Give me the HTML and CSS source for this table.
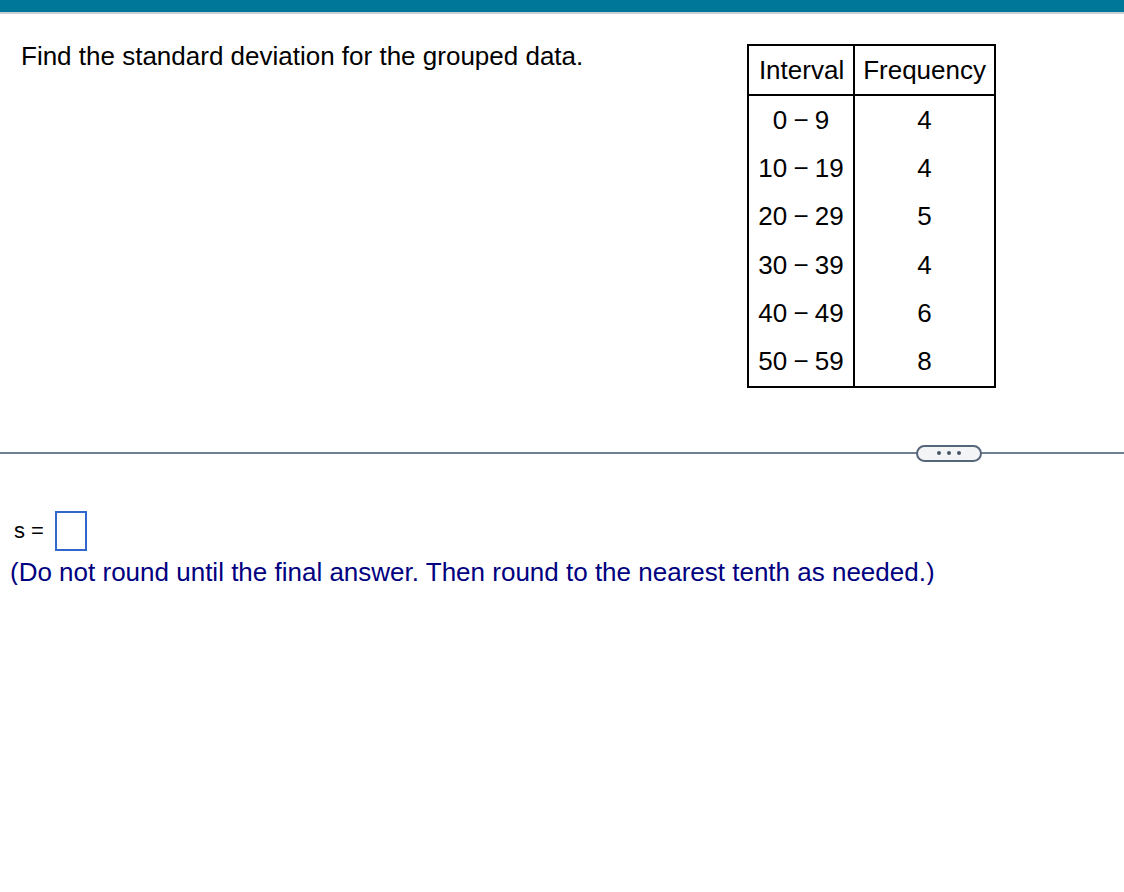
FILE: index.html
```html
<!DOCTYPE html>
<html>
<head>
<meta charset="utf-8">
<link rel="stylesheet" href="styles.css">
</head>
<body>
<div class="topbar"></div>
<div class="question">
  <p class="prompt">Find the standard deviation for the grouped data.</p>
  <table class="data">
    <thead>
      <tr><th>Interval</th><th>Frequency</th></tr>
    </thead>
    <tbody>
      <tr><td>0 &minus; 9</td><td>4</td></tr>
      <tr><td>10 &minus; 19</td><td>4</td></tr>
      <tr><td>20 &minus; 29</td><td>5</td></tr>
      <tr><td>30 &minus; 39</td><td>4</td></tr>
      <tr><td>40 &minus; 49</td><td>6</td></tr>
      <tr><td>50 &minus; 59</td><td>8</td></tr>
    </tbody>
  </table>
</div>
<div class="divider">
  <span class="more"><i></i><i></i><i></i></span>
</div>
<div class="answer">
  <div class="line"><span class="var">s =</span><span class="box"></span></div>
  <p class="hint">(Do not round until the final answer. Then round to the nearest tenth as needed.)</p>
</div>
</body>
</html>
```
FILE: styles.css
```css
html, body {
  margin: 0;
  padding: 0;
  background: #fff;
}
body {
  font-family: "Liberation Sans", Arial, sans-serif;
  color: #000;
  font-size: 26px;
}
.topbar {
  height: 12px;
  background: #007698;
  border-bottom: 2px solid #c9cfd4;
}
.question {
  display: flex;
  justify-content: space-between;
  align-items: flex-start;
  padding: 30px 128px 0 21px;
}
.prompt {
  margin: 0;
  font-size: 26px;
  line-height: 24px;
}
.data {
  border-collapse: collapse;
  border: 2px solid #000;
  font-size: 26px;
}
.data th {
  font-weight: normal;
  height: 48px;
  padding: 0 8px;
  border-bottom: 2px solid #000;
  border-left: 2px solid #000;
}
.data th:first-child { border-left: none; padding: 0 9px 0 10px; }
.data td {
  text-align: center;
  height: 48.3px;
  padding: 0;
  word-spacing: -1px;
}
.data td:first-child {
  border-right: 2px solid #000;
}
.divider {
  position: relative;
  height: 2px;
  background: #6f7e92;
  margin: 64px 0 0;
}
.more {
  position: absolute;
  left: 916px;
  top: -7px;
  width: 62px;
  height: 13px;
  border: 2px solid #56667a;
  border-radius: 9px;
  background: #f3f4f6;
  display: flex;
  justify-content: center;
  align-items: center;
  gap: 6px;
}
.more i {
  width: 4px;
  height: 4px;
  border-radius: 50%;
  background: #4a5566;
}
.answer {
  padding: 57px 0 0 14px;
}
.line {
  display: flex;
  align-items: center;
  gap: 11px;
}
.var {
  font-size: 22px;
}
.box {
  width: 28px;
  height: 36px;
  border: 2px solid #3366cc;
}
.hint {
  margin: 8px 0 0 -4px;
  color: #000080;
  font-size: 26px;
  line-height: 26px;
}
```
